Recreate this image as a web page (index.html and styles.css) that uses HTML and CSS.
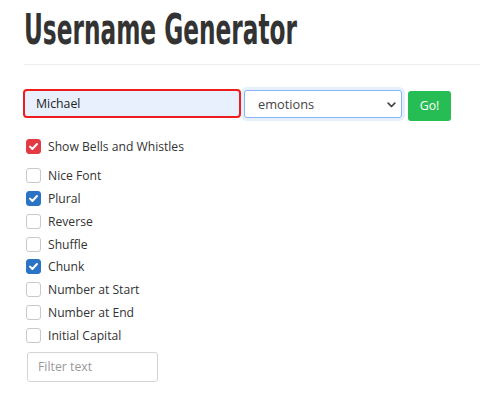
FILE: index.html
```html
<!DOCTYPE html>
<html>
<head>
<meta charset="utf-8">
<link rel="stylesheet" href="styles.css">
</head>
<body>
<div class="page">
  <h1 class="title"><span class="title-text">Username Generator</span></h1>
  <div class="rule"></div>
  <div class="form-row">
    <div class="name-input">Michael</div>
    <div class="select">emotions
      <svg class="chev" width="9" height="6" viewBox="0 0 9 6"><path d="M1.2 1.2 L4.5 4.5 L7.8 1.2" fill="none" stroke="#444" stroke-width="1.7" stroke-linecap="round" stroke-linejoin="round"/></svg>
    </div>
    <div class="go">Go!</div>
  </div>
  <div class="bells">
    <span class="box red"><svg width="11" height="9" viewBox="0 0 11 9"><path d="M2 4.6 L4.4 7 L9 2" fill="none" stroke="#fff" stroke-width="2" stroke-linecap="round" stroke-linejoin="round"/></svg></span>
    <span>Show Bells and Whistles</span>
  </div>
  <ul class="options">
    <li><span class="box"></span><span>Nice Font</span></li>
    <li><span class="box blue"><svg width="11" height="9" viewBox="0 0 11 9"><path d="M2 4.6 L4.4 7 L9 2" fill="none" stroke="#fff" stroke-width="2" stroke-linecap="round" stroke-linejoin="round"/></svg></span><span>Plural</span></li>
    <li><span class="box"></span><span>Reverse</span></li>
    <li><span class="box"></span><span>Shuffle</span></li>
    <li><span class="box blue"><svg width="11" height="9" viewBox="0 0 11 9"><path d="M2 4.6 L4.4 7 L9 2" fill="none" stroke="#fff" stroke-width="2" stroke-linecap="round" stroke-linejoin="round"/></svg></span><span>Chunk</span></li>
    <li><span class="box"></span><span>Number at Start</span></li>
    <li><span class="box"></span><span>Number at End</span></li>
    <li><span class="box"></span><span>Initial Capital</span></li>
  </ul>
  <div class="filter">Filter text</div>
</div>
</body>
</html>
```
FILE: styles.css
```css
html, body { margin: 0; padding: 0; background: #fff; }
body { font-family: "Open Sans", "Liberation Sans", sans-serif; color: #333; font-size: 12.15px; }
.page { padding: 0 0 0 24px; }
.title { margin: 0; padding-top: 5px; height: 49px; font-family: "DejaVu Sans Condensed", "DejaVu Sans", sans-serif; font-weight: bold; font-size: 42px; line-height: 50px; color: #333; white-space: nowrap; }
.title-text { display: inline-block; transform: scaleX(0.615); transform-origin: left center; letter-spacing: 0; }
.rule { height: 1px; background: #eee; margin-top: 10px; }
.form-row { display: flex; align-items: flex-start; margin-top: 24px; }
.name-input { box-sizing: border-box; width: 218px; height: 29px; margin-left: -1px; border: 2px solid #ee1c1c; border-radius: 4px; background: #e8f0fe; padding-left: 11px; line-height: 25px; font-size: 12.3px; color: #222; }
.select { position: relative; box-sizing: border-box; width: 158px; height: 28px; margin-left: 3px; margin-top: 1px; border: 1px solid #86b7f5; border-radius: 3px; box-shadow: 0 0 0 3px #e6f0fc; background: #fff; padding-left: 13px; line-height: 26px; font-size: 12.8px; color: #444; }
.chev { position: absolute; right: 5px; top: 11px; }
.go { box-sizing: border-box; width: 43px; height: 30px; margin-left: 6px; margin-top: 2px; background: #27bd55; border-radius: 3px; color: #fff; text-align: center; line-height: 29px; font-size: 12.3px; }
.bells { display: flex; align-items: center; gap: 7px; margin-top: 17px; margin-left: 2px; height: 16px; }
.box { box-sizing: border-box; width: 15px; height: 15px; border: 1px solid #c9c9c9; border-radius: 3px; background: #fff; display: inline-flex; align-items: center; justify-content: center; flex: none; }
.box.red { background: #e43a44; border-color: #e43a44; }
.box.blue { background: #2a73c5; border-color: #2a73c5; }
.options { list-style: none; margin: 10px 0 0 2px; padding: 0; }
.options li { display: flex; align-items: center; gap: 7px; height: 22.86px; }
.filter { box-sizing: border-box; width: 131px; height: 30px; margin-left: 3px; margin-top: 5px; border: 1px solid #d4d4d4; border-radius: 3px; padding-left: 10px; line-height: 28px; color: #999; font-size: 12.3px; }
```
